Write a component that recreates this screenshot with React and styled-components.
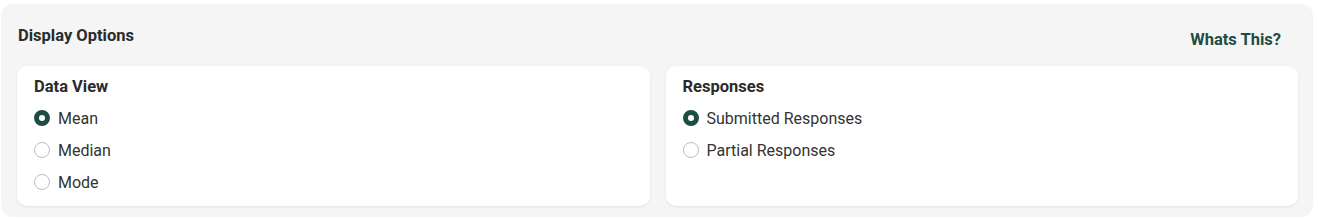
import React, { useState } from 'react';
import styled, { createGlobalStyle } from 'styled-components';

const GlobalStyle = createGlobalStyle`
  body {
    margin: 0;
    background: #ffffff;
    font-family: Roboto, "Liberation Sans", sans-serif;
  }
`;

const Page = styled.div`
  padding: 4px 5px 0 1px;
`;

const Panel = styled.section`
  background: #f5f5f5;
  border-radius: 12px;
  padding: 22px 15px 11px 16px;
`;

const Header = styled.div`
  display: flex;
  justify-content: space-between;
  align-items: flex-start;
  height: 40px;
`;

const Title = styled.h2`
  margin: 0 0 0 1px;
  font-size: 16.5px;
  line-height: 20px;
  font-weight: 700;
  color: #2b2b2b;
`;

const HelpLink = styled.a`
  margin: 4px 17px 0 0;
  font-size: 16.5px;
  line-height: 20px;
  font-weight: 700;
  color: #1f4d45;
  text-decoration: none;
  cursor: pointer;
`;

const Cards = styled.div`
  display: grid;
  grid-template-columns: 1fr 1fr;
  gap: 16px;
`;

const Card = styled.div`
  background: #ffffff;
  border-radius: 10px;
  box-shadow: 0 1px 3px rgba(0, 0, 0, 0.08);
  padding: 11px 16px 8px 17px;
  height: 140px;
  box-sizing: border-box;
`;

const CardTitle = styled.h3`
  margin: 0 0 5px 0;
  font-size: 16.5px;
  line-height: 20px;
  font-weight: 700;
  color: #2b2b2b;
`;

const Option = styled.label`
  display: flex;
  align-items: center;
  gap: 8px;
  height: 32px;
  font-size: 16px;
  color: #333333;
  cursor: pointer;
`;

const Dot = styled.span`
  width: 16px;
  height: 16px;
  box-sizing: border-box;
  border-radius: 50%;
  flex-shrink: 0;
  border: ${p => (p.checked ? '5px solid #1f4d45' : '1px solid #b9bfc6')};
  background: #ffffff;
`;

const RadioGroup = ({ options, value, onChange }) => (
  <div>
    {options.map(opt => (
      <Option key={opt} onClick={() => onChange(opt)}>
        <Dot checked={value === opt} />
        {opt}
      </Option>
    ))}
  </div>
);

export default function App() {
  const [view, setView] = useState('Mean');
  const [responses, setResponses] = useState('Submitted Responses');

  return (
    <Page>
      <GlobalStyle />
      <Panel>
        <Header>
          <Title>Display Options</Title>
          <HelpLink>Whats This?</HelpLink>
        </Header>
        <Cards>
          <Card>
            <CardTitle>Data View</CardTitle>
            <RadioGroup options={['Mean', 'Median', 'Mode']} value={view} onChange={setView} />
          </Card>
          <Card>
            <CardTitle>Responses</CardTitle>
            <RadioGroup
              options={['Submitted Responses', 'Partial Responses']}
              value={responses}
              onChange={setResponses}
            />
          </Card>
        </Cards>
      </Panel>
    </Page>
  );
}
